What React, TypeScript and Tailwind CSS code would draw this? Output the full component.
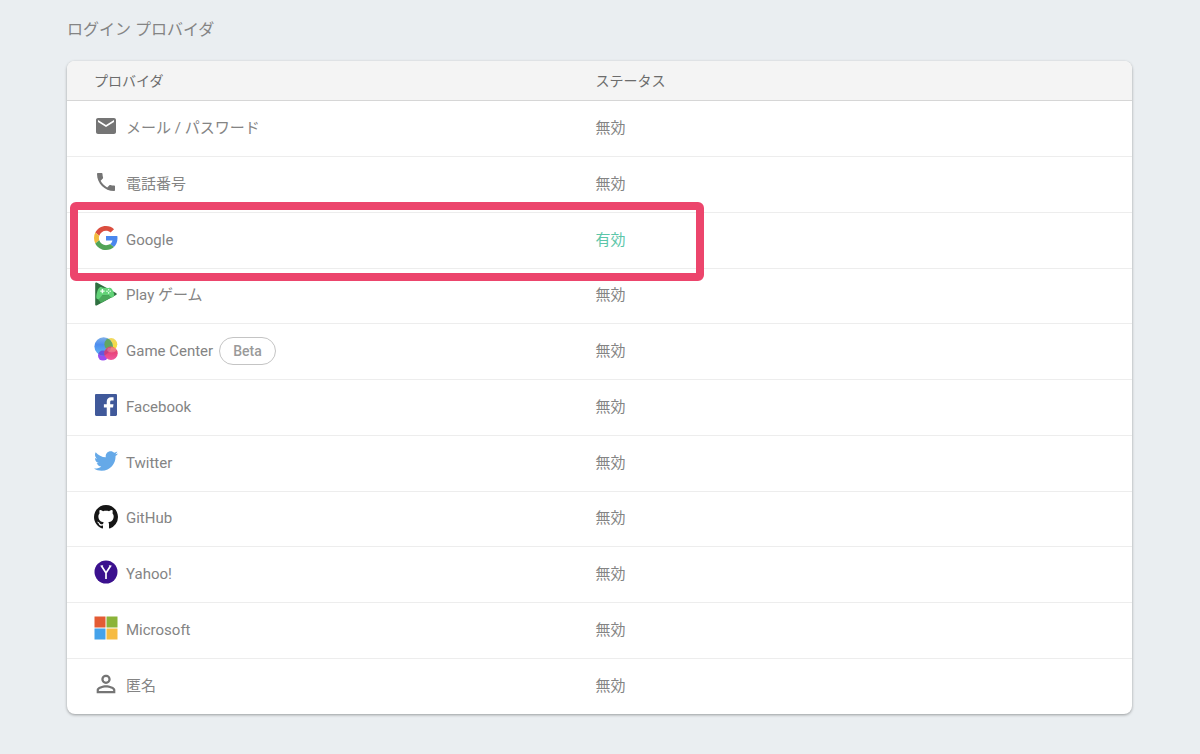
import type { ReactNode } from 'react'
import { MdEmail, MdPersonOutline, MdPhone } from 'react-icons/md'
import { FaTwitter } from 'react-icons/fa'
import clsx from 'clsx'

// ─── Logos ───────────────────────────────────────────────────────────────────

function GoogleLogo() {
  return (
    <svg viewBox="0 0 48 48" className="size-6" aria-hidden="true">
      <path fill="#db4e3f" d="M24 9.5c3.54 0 6.71 1.22 9.21 3.6l6.85-6.85C35.9 2.38 30.47 0 24 0 14.62 0 6.51 5.38 2.56 13.22l7.98 6.19C12.43 13.72 17.74 9.5 24 9.5z" />
      <path fill="#4a87ee" d="M46.98 24.55c0-1.57-.15-3.09-.38-4.55H24v9.02h12.94c-.58 2.96-2.26 5.48-4.78 7.18l7.73 6c4.51-4.18 7.09-10.36 7.09-17.65z" />
      <path fill="#f2bb3d" d="M10.53 28.59c-.48-1.45-.76-2.99-.76-4.59s.27-3.14.76-4.59l-7.98-6.19C.92 16.46 0 20.12 0 24c0 3.88.92 7.54 2.56 10.78l7.97-6.19z" />
      <path fill="#52a456" d="M24 48c6.48 0 11.93-2.13 15.89-5.81l-7.73-6c-2.15 1.45-4.92 2.3-8.16 2.3-6.26 0-11.57-4.22-13.47-9.91l-7.98 6.19C6.51 42.62 14.62 48 24 48z" />
    </svg>
  )
}

function PlayGamesLogo() {
  return (
    <svg viewBox="0 0 24 24" className="size-6" aria-hidden="true">
      <path fill="#2f7040" d="M1.2 1.4c0-.8.8-1.2 1.5-.9L22 10.9c.9.5.9 1.6 0 2.1L2.7 23.4c-.7.4-1.5 0-1.5-.8z" />
      <path fill="#4aa95b" d="m4 17.5 4-4 6-.5 4 2.1-11 5.9z" />
      <path fill="#62d277" d="M5.6 5.4c1.2-.7 2.2-.4 3.4.3l5.4.4c1-.6 2.2-.6 3 .3 1.6 1.8 2.7 4.4 2.8 6.6.1 2.4-2.4 3.2-4 1.6L14.4 13l-6 .3-2.8 3.2c-1.4 1.5-3.4.7-3.3-1.5.1-3 1.3-8.4 3.3-9.6z" />
      <path stroke="#f1fff3" strokeWidth="1.4" d="M8.4 6.9v4.4M6.2 9.1h4.4" />
      <g fill="#e5ffe9">
        <circle cx="14.6" cy="7.7" r=".8" />
        <circle cx="14.6" cy="10.9" r=".8" />
        <circle cx="13" cy="9.3" r=".8" />
        <circle cx="16.2" cy="9.3" r=".8" />
      </g>
    </svg>
  )
}

function GameCenterLogo() {
  return (
    <svg viewBox="0 0 24 24" className="size-6" aria-hidden="true">
      <defs>
        <linearGradient id="gc-blue" x1="0" y1="0" x2="0" y2="1">
          <stop offset="0" stopColor="#7fb0e8" />
          <stop offset=".4" stopColor="#4d8df0" />
          <stop offset="1" stopColor="#63b9f3" />
        </linearGradient>
        <linearGradient id="gc-yellow" x1="0" y1="0" x2="0" y2="1">
          <stop offset="0" stopColor="#f0d860" />
          <stop offset="1" stopColor="#f5df35" />
        </linearGradient>
        <linearGradient id="gc-pink" x1="0" y1="0" x2="0" y2="1">
          <stop offset="0" stopColor="#ef7a55" />
          <stop offset=".45" stopColor="#e84379" />
          <stop offset="1" stopColor="#f0589f" />
        </linearGradient>
        <clipPath id="gc-clip">
          <circle cx="9.6" cy="9.5" r="9.2" />
        </clipPath>
      </defs>
      <circle cx="17.2" cy="7.2" r="6.1" fill="url(#gc-yellow)" />
      <circle cx="9" cy="18.6" r="5" fill="#9b4cf0" />
      <circle cx="9.6" cy="9.5" r="9.2" fill="url(#gc-blue)" />
      <g clipPath="url(#gc-clip)">
        <circle cx="17.2" cy="7.2" r="6.8" fill="#61a662" />
        <circle cx="9" cy="18.6" r="5" fill="#6557df" />
      </g>
      <circle cx="17" cy="16.2" r="6.7" fill="url(#gc-pink)" />
      <path fill="#b83a83" opacity=".65" d="M10.5 14.6c1-3 3.8-5.1 7.1-5.1-1.2 4.4-3.8 7.6-7.3 8.9z" />
      <ellipse cx="17.6" cy="13" rx="4.4" ry="2.4" fill="#fff" opacity=".2" />
    </svg>
  )
}

function FacebookLogo() {
  return (
    <svg viewBox="0 0 24 24" className="size-[22px]" aria-hidden="true">
      <path fill="#40599a" d="M22.675 0H1.325C.593 0 0 .593 0 1.325v21.351C0 23.407.593 24 1.325 24H12.82v-9.294H9.692v-3.622h3.128V8.413c0-3.1 1.893-4.788 4.659-4.788 1.325 0 2.463.099 2.795.143v3.24l-1.918.001c-1.504 0-1.795.715-1.795 1.763v2.313h3.587l-.467 3.622h-3.12V24h6.116c.73 0 1.323-.593 1.323-1.325V1.325C24 .593 23.407 0 22.675 0z" />
    </svg>
  )
}

function GitHubLogo() {
  return (
    <svg viewBox="0 0 16 16" className="size-6" aria-hidden="true">
      <path fill="#161616" d="M8 0C3.58 0 0 3.58 0 8c0 3.54 2.29 6.53 5.47 7.59.4.07.55-.17.55-.38 0-.19-.01-.82-.01-1.49-2.01.37-2.53-.49-2.69-.94-.09-.23-.48-.94-.82-1.13-.28-.15-.68-.52-.01-.53.63-.01 1.08.58 1.23.82.72 1.21 1.87.87 2.33.66.07-.52.28-.87.51-1.07-1.78-.2-3.64-.89-3.64-3.95 0-.87.31-1.59.82-2.15-.08-.2-.36-1.02.08-2.12 0 0 .67-.21 2.2.82.64-.18 1.32-.27 2-.27s1.36.09 2 .27c1.53-1.04 2.2-.82 2.2-.82.44 1.1.16 1.92.08 2.12.51.56.82 1.27.82 2.15 0 3.07-1.87 3.75-3.65 3.95.29.25.54.73.54 1.48 0 1.07-.01 1.93-.01 2.2 0 .21.15.46.55.38A8.01 8.01 0 0 0 16 8c0-4.42-3.58-8-8-8z" />
    </svg>
  )
}

function YahooLogo() {
  return (
    <svg viewBox="0 0 24 24" className="size-6" aria-hidden="true">
      <circle cx="12" cy="12" r="11.5" fill="#3b118e" />
      <path fill="none" stroke="#fff" strokeWidth="1.7" d="m7.5 6 4.5 7 4.5-7M12 13v6" />
      <path stroke="#fff" strokeWidth="1" d="M6.5 5.9h2.6M14.9 5.9h2.6" />
    </svg>
  )
}

function MicrosoftLogo() {
  return (
    <svg viewBox="0 0 24 24" className="size-6" aria-hidden="true">
      <path fill="#e35b34" d="M.5.5h11v11H.5z" />
      <path fill="#8bb339" d="M12.5.5h11v11h-11z" />
      <path fill="#45a2ea" d="M.5 12.5h11v11H.5z" />
      <path fill="#f6bb42" d="M12.5 12.5h11v11h-11z" />
    </svg>
  )
}

// ─── Providers ───────────────────────────────────────────────────────────────

interface Provider {
  name: string
  icon: ReactNode
  enabled?: boolean
  beta?: boolean
}

const providers: Provider[] = [
  { name: 'メール / パスワード', icon: <MdEmail className="size-6" /> },
  { name: '電話番号', icon: <MdPhone className="size-6" /> },
  { name: 'Google', icon: <GoogleLogo />, enabled: true },
  { name: 'Play ゲーム', icon: <PlayGamesLogo /> },
  { name: 'Game Center', icon: <GameCenterLogo />, beta: true },
  { name: 'Facebook', icon: <FacebookLogo /> },
  { name: 'Twitter', icon: <FaTwitter className="size-6 text-[#65a9e8]" /> },
  { name: 'GitHub', icon: <GitHubLogo /> },
  { name: 'Yahoo!', icon: <YahooLogo /> },
  { name: 'Microsoft', icon: <MicrosoftLogo /> },
  { name: '匿名', icon: <MdPersonOutline className="size-7 shrink-0" /> },
]

function ProviderRow({ provider }: { provider: Provider }) {
  return (
    <tr className="relative h-14 border-b border-[#ededed] nth-[4n]:h-[55px] last:border-b-0">
      <td className="pb-1 pl-[27px]">
        <div className="flex items-center gap-2">
          <span className="flex size-6 shrink-0 items-center justify-center text-[#757575]">
            {provider.icon}
          </span>
          <span className="pt-[3px]">{provider.name}</span>
          {provider.beta && (
            <span className="-ml-0.5 mt-1 rounded-full border border-[#c4c4c4] px-[13px] text-sm leading-[26px] font-medium text-[#9a9a9a]">
              Beta
            </span>
          )}
        </div>
        {provider.enabled && (
          <div className="pointer-events-none absolute -top-2.5 -bottom-3.5 left-[3px] z-10 w-[calc(60%-5px)] rounded-md border-8 border-[#ec456c]" />
        )}
      </td>
      <td className={clsx('pb-px pl-7', provider.enabled && 'text-[#5cc6a9]')}>
        {provider.enabled ? '有効' : '無効'}
      </td>
    </tr>
  )
}

export default function App() {
  return (
    <main className="min-h-screen bg-[#eaeef1] pt-[17px] pr-[68px] pb-10 pl-[67px] font-[Roboto,'Noto_Sans_CJK_JP',sans-serif] text-[#848484]">
      <h1 className="mb-[18px] text-base leading-[26px]">ログイン プロバイダ</h1>
      <div className="overflow-hidden rounded-lg bg-white shadow-[0_1px_3px_rgba(0,0,0,0.35)]">
        <table className="w-full table-fixed border-collapse text-left text-[15px] leading-5">
          <thead>
            <tr className="h-[39px] border-b border-[#d6d6d6] bg-[#f4f4f4] text-sm text-[#6c6c6c]">
              <th className="w-[47%] pt-px pl-[27px] font-normal">プロバイダ</th>
              <th className="pt-px pl-7 font-normal">ステータス</th>
            </tr>
          </thead>
          <tbody>
            {providers.map((p) => (
              <ProviderRow key={p.name} provider={p} />
            ))}
          </tbody>
        </table>
      </div>
    </main>
  )
}
